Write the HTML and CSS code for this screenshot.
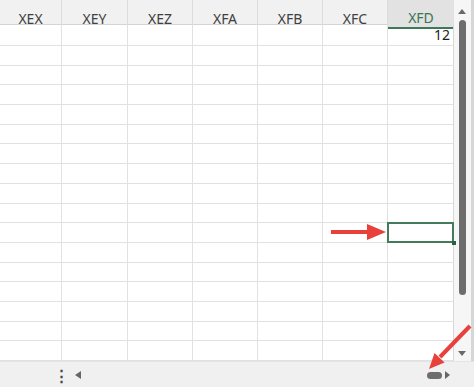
FILE: index.html
```html
<!DOCTYPE html>
<html lang="en">
  <head>
    <meta charset="UTF-8" />
    <title>Sheet - last column</title>
    <link rel="stylesheet" href="styles.css">
  </head>
  <body>
    <div id="window">
      <div id="top">
        <div id="sheet">
          <div id="colHeaders">
            <div class="col-head">XEX</div>
            <div class="col-head">XEY</div>
            <div class="col-head">XEZ</div>
            <div class="col-head">XFA</div>
            <div class="col-head">XFB</div>
            <div class="col-head">XFC</div>
            <div class="col-head active">XFD</div>
          </div>
          <div id="cells"></div>
        </div>
        <div id="vScroll">
          <div class="arrow-up"></div>
          <div class="v-thumb"></div>
          <div class="arrow-down"></div>
        </div>
      </div>
      <div id="bottomBar">
        <div class="tab-dots">&#8942;</div>
        <div class="arrow-left"></div>
        <div class="h-space"></div>
        <div class="h-thumb"></div>
        <div class="arrow-right"></div>
      </div>

      <!-- callout arrows -->
      <svg id="callouts" width="474" height="387" viewBox="0 0 474 387">
        <line x1="331" y1="232" x2="370" y2="232" stroke="#e8403b" stroke-width="4" />
        <polygon points="367,224 386,232 367,240" fill="#e8403b" />
        <line x1="470" y1="326" x2="440" y2="357" stroke="#e8403b" stroke-width="4" />
        <polygon points="444.5,362.5 434.5,353 429,369" fill="#e8403b" />
      </svg>
    </div>

    <script>
      const cells = document.getElementById("cells");
      const rows = 17;
      const cols = 7;

      for (let r = 0; r < rows; r++) {
        for (let c = 0; c < cols; c++) {
          const cell = document.createElement("div");
          cell.classList.add("cell");
          if (r === 0 && c === 6) cell.textContent = "12";
          if (r === 10 && c === 6) cell.classList.add("selected");
          cells.appendChild(cell);
        }
      }
    </script>
  </body>
</html>
```

FILE: styles.css
```css
body {
  margin: 0;
  font-family: "Noto Sans", Arial, sans-serif;
  background-color: #ffffff;
}
#window {
  position: relative;
  width: 474px;
  height: 387px;
  overflow: hidden;
  display: flex;
  flex-direction: column;
}
#top {
  display: flex;
  height: 361px;
}
#sheet {
  width: 454px;
  display: flex;
  flex-direction: column;
}
#colHeaders,
#cells {
  display: grid;
  grid-template-columns: 62px 66px 65px 65px 65px 65px 66px;
}
#colHeaders {
  height: 25px;
  background-color: #f1f1f1;
  box-sizing: border-box;
  border-bottom: 1px solid #d4d4d4;
}
.col-head {
  display: flex;
  align-items: center;
  justify-content: center;
  padding-top: 8px;
  font-size: 14px;
  color: #404040;
  box-sizing: border-box;
  border-right: 1px solid #dcdcdc;
  background-clip: padding-box;
}
.col-head:last-child {
  border-right: none;
}
.col-head.active {
  background-color: #e2e2e2;
  color: #3a7553;
  border-bottom: 2px solid #3f7a58;
  margin-bottom: -1px;
}
#cells {
  height: 336px;
  grid-template-rows: repeat(17, 1fr);
}
.cell {
  position: relative;
  box-sizing: border-box;
  border-right: 1px solid #e1e1e1;
  border-bottom: 1px solid #e1e1e1;
  font-size: 14px;
  color: #1e1e1e;
  text-align: right;
  padding-right: 3px;
  line-height: 20px;
}
.cell:nth-child(7n) {
  border-right: 1px solid #d8d8d8;
}
.selected::after {
  content: "";
  position: absolute;
  top: -1px;
  left: -1px;
  right: -1px;
  bottom: -1px;
  border: 2px solid #457b5b;
}
.selected::before {
  content: "";
  position: absolute;
  right: -3px;
  bottom: -3px;
  width: 4px;
  height: 4px;
  background-color: #2f5f43;
  z-index: 1;
}
/* Vertical scrollbar */
#vScroll {
  width: 20px;
  box-sizing: border-box;
  background-color: #f6f6f6;
  border-right: 3px solid #d6d6d6;
  display: flex;
  flex-direction: column;
  align-items: center;
  padding: 9px 1px 0 0;
}
.arrow-up {
  width: 0;
  height: 0;
  border-left: 4px solid transparent;
  border-right: 4px solid transparent;
  border-bottom: 5px solid #6a6a6a;
}
.v-thumb {
  width: 7px;
  height: 275px;
  margin-top: 6px;
  border-radius: 4px;
  background-color: #6d6d6d;
}
.arrow-down {
  margin-top: 56px;
  width: 0;
  height: 0;
  border-left: 4px solid transparent;
  border-right: 4px solid transparent;
  border-top: 5px solid #6a6a6a;
}
/* Bottom bar */
#bottomBar {
  height: 26px;
  background-color: #f0f0f0;
  border-top: 1px solid #e4e4e4;
  box-sizing: border-box;
  display: flex;
  align-items: center;
  padding: 1px 24px 0 54px;
}
.tab-dots {
  font-size: 15px;
  font-weight: bold;
  color: #444;
  width: 8px;
  text-align: center;
}
.arrow-left {
  margin-left: 13px;
  width: 0;
  height: 0;
  border-top: 4px solid transparent;
  border-bottom: 4px solid transparent;
  border-right: 6px solid #666;
}
.h-space {
  flex: 1;
}
.h-thumb {
  width: 15px;
  height: 7px;
  border-radius: 4px;
  background-color: #6d6d6d;
}
.arrow-right {
  margin-left: 3px;
  width: 0;
  height: 0;
  border-top: 4px solid transparent;
  border-bottom: 4px solid transparent;
  border-left: 5px solid #666;
}
#callouts {
  position: absolute;
  top: 0;
  left: 0;
  pointer-events: none;
}
```
